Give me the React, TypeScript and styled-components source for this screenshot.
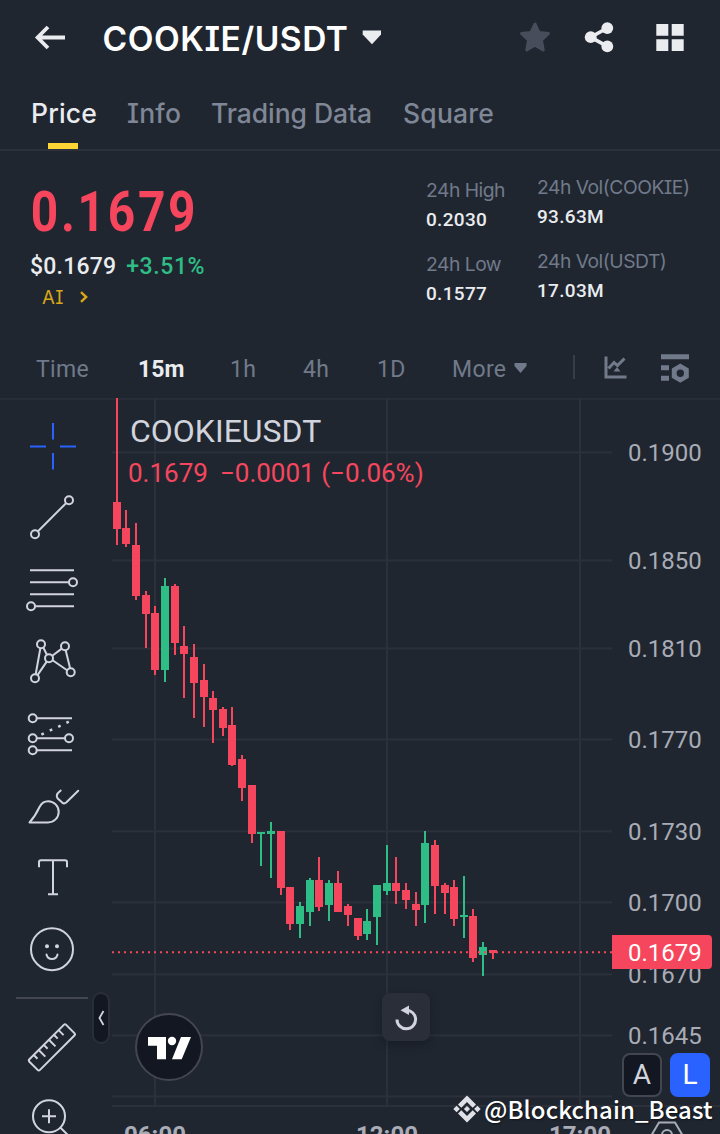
import React from "react";
import styled, { createGlobalStyle } from "styled-components";

const c = {
  bg: "#202630",
  line: "#2b303b",
  text: "#eaecef",
  muted: "#7f8796",
  dim: "#707a8a",
  red: "#f6465d",
  green: "#2ebd85",
  yellow: "#fcd535",
  icon: "#d1d4dc",
  axis: "#a9acb6",
  panel: "#131722",
  blue: "#2962ff",
};

const GlobalStyle = createGlobalStyle`
  * { box-sizing: border-box; }
  body { margin: 0; background: ${c.bg}; }
`;

const Screen = styled.main`
  display: flex;
  flex-direction: column;
  width: 720px;
  height: 1134px;
  overflow: hidden;
  background: ${c.bg};
  color: ${c.text};
  font-family: Inter, "Liberation Sans", sans-serif;
  font-feature-settings: "cv08" 1;
  white-space: nowrap;
`;

const Header = styled.header`
  display: flex;
  align-items: center;
  flex: none;
  height: 78px;
  padding: 0 34px 0 31px;
`;

const Title = styled.h1`
  width: 246px;
  margin: 0 14px 0 31px;
  padding-left: 0.5px;
  color: #fff;
  font-size: 33.5px;
  font-weight: 600;
  line-height: 40px;
  letter-spacing: 0.55px;
`;

const HeaderActions = styled.div`
  display: flex;
  gap: 30px;
  margin-left: auto;
`;

const Tabs = styled.nav`
  display: flex;
  gap: 30px;
  flex: none;
  height: 73px;
  padding: 18px 30px 0 31px;
  border-bottom: 2px solid ${c.line};
`;

const Tab = styled.div<{ $active?: boolean; $width: number; $track?: number }>`
  display: flex;
  flex-direction: column;
  width: ${(p) => p.$width}px;
  color: ${(p) => (p.$active ? c.text : c.muted)};
  font-size: 26.5px;
  font-weight: 500;
  line-height: 35px;
  letter-spacing: ${(p) => p.$track ?? 0.2}px;
`;

const TabMarker = styled.span`
  width: 30px;
  height: 6px;
  margin: 12px 0 0 17px;
  background: ${c.yellow};
`;

const Summary = styled.section`
  display: flex;
  flex: none;
  height: 189px;
  padding-left: 30px;
`;

const PriceColumn = styled.div`
  width: 396px;
  padding-top: 31px;
`;

const LastPrice = styled.div`
  padding-left: 1px;
  color: ${c.red};
  font: 700 55px/60px Roboto, sans-serif;
  letter-spacing: 3.1px;
  transform: scaleX(0.87);
  transform-origin: 0 50%;
`;

const PriceLine = styled.div`
  display: flex;
  gap: 10px;
  margin-top: 11px;
  font: 500 23px/28px Roboto, sans-serif;
  letter-spacing: 0.2px;
`;

const Change = styled.span`
  color: ${c.green};
  letter-spacing: 0.6px;
`;

const TagLink = styled.div`
  display: flex;
  align-items: center;
  gap: 15px;
  margin: 6px 0 0 12px;
  color: #d9a616;
  font-size: 18.6px;
  line-height: 20px;
  letter-spacing: 0.4px;
`;

const StatColumn = styled.dl<{ $width: number; $top: number }>`
  width: ${(p) => p.$width}px;
  margin: 0;
  padding-top: ${(p) => p.$top}px;
`;

const StatLabel = styled.dt`
  color: ${c.dim};
  font-size: 19.3px;
  line-height: 24px;
  letter-spacing: -0.5px;
`;

const StatValue = styled.dd`
  margin: 6px 0 20px;
  font: 500 19px/24px Roboto, sans-serif;
  letter-spacing: 0.3px;
`;

const Intervals = styled.nav`
  display: flex;
  align-items: center;
  flex: none;
  height: 58px;
  padding-left: 36px;
  font: 400 23px/28px Roboto, sans-serif;
`;

const Interval = styled.span<{ $width: number; $active?: boolean }>`
  width: ${(p) => p.$width}px;
  padding-top: 2px;
  color: ${(p) => (p.$active ? c.text : c.dim)};
  font-weight: ${(p) => (p.$active ? 700 : 400)};
  letter-spacing: ${(p) => (p.$active ? 0 : 0.35)}px;
`;

const Separator = styled.i`
  width: 2px;
  height: 24px;
  margin: 0 29px 4px 46px;
  background: #363c48;
`;

const IntervalActions = styled.div`
  display: flex;
  align-items: center;
  gap: 30px;
  padding-bottom: 3px;
`;

const Workspace = styled.section`
  display: flex;
  flex: 1;
  min-height: 0;
  box-shadow: inset 0 2px 0 #272c37;
`;

const Toolbar = styled.aside`
  position: relative;
  display: flex;
  flex-direction: column;
  flex: none;
  width: 112px;
  padding: 12px 0 0 16px;
`;

const Tool = styled.svg`
  flex: none;
  width: 72px;
  height: 72px;
  fill: none;
  stroke: ${c.icon};
  stroke-width: 2;
`;

const ToolDivider = styled.hr`
  flex: none;
  width: 72px;
  height: 2px;
  margin: 11px 0 12px;
  border: 0;
  background: #434651;
`;

const CollapseHandle = styled.button`
  position: absolute;
  top: 594px;
  left: 92px;
  display: flex;
  align-items: center;
  justify-content: center;
  width: 18px;
  height: 52px;
  padding: 0;
  border: 2px solid #2a2e39;
  border-radius: 9px;
  background: ${c.panel};
`;

const ChartArea = styled.div`
  position: relative;
  width: 608px;
`;

const ChartSvg = styled.svg`
  display: block;
  width: 608px;
  height: 736px;
  font-family: Roboto, sans-serif;
`;

const Legend = styled.div`
  position: absolute;
  top: 14px;
  left: 16px;
  font-family: Roboto, sans-serif;
`;

const Symbol = styled.div`
  padding-left: 2px;
  color: ${c.icon};
  font-size: 32px;
  line-height: 38px;
`;

const Quote = styled.div`
  display: flex;
  gap: 12px;
  margin-top: 7px;
  color: ${c.red};
  font-size: 26px;
  line-height: 32px;
`;

const BrandBadge = styled.div`
  position: absolute;
  top: 615px;
  left: 23px;
  width: 68px;
  height: 68px;
  border: 2px solid #434651;
  border-radius: 50%;
  background: ${c.panel};
`;

const ResetButton = styled.button`
  position: absolute;
  top: 595px;
  left: 270px;
  width: 48px;
  height: 48px;
  padding: 0;
  border: 0;
  border-radius: 8px;
  background: #2a2e39;
  box-shadow: 0 4px 8px rgba(10, 13, 20, 0.35);
`;

const ScaleButtons = styled.div`
  position: absolute;
  top: 655px;
  left: 510px;
  display: flex;
  gap: 8px;
`;

const ScaleButton = styled.button<{ $on?: boolean }>`
  width: 40px;
  height: 44px;
  padding: 0;
  border: 2px solid ${(p) => (p.$on ? c.blue : "#434651")};
  border-radius: 8px;
  background: ${(p) => (p.$on ? c.blue : c.panel)};
  color: ${(p) => (p.$on ? "#fff" : c.icon)};
  font: 400 28px/38px Roboto, sans-serif;
`;

const Watermark = styled.div`
  position: absolute;
  top: 693px;
  left: 341px;
  display: flex;
  align-items: center;
  gap: 3px;
  color: #fff;
  font: 500 24px/36px "Noto Sans CJK SC", sans-serif;
  letter-spacing: 0.1px;
  text-shadow: 1px 1px 2px rgba(0, 0, 0, 0.6);
`;

// x, high, body top, body bottom, low, rising
type Candle = [number, number, number, number, number, boolean?];

const candles: Candle[] = [
  [117, 398, 502, 529, 545],
  [126, 510, 528, 544, 547],
  [136, 523, 545, 596, 600],
  [146, 591, 595, 614, 648],
  [155, 606, 613, 670, 675],
  [165, 578, 586, 670, 682, true],
  [175, 584, 586, 643, 655],
  [184, 626, 646, 654, 698],
  [194, 644, 657, 683, 718],
  [204, 664, 680, 697, 727],
  [213, 691, 698, 710, 743],
  [223, 707, 709, 728, 736],
  [232, 707, 725, 765, 766],
  [242, 755, 759, 788, 801],
  [252, 785, 785, 834, 843],
  [261, 832, 832, 834, 866, true],
  [271, 822, 831, 834, 878, true],
  [281, 831, 831, 888, 895],
  [290, 887, 887, 924, 930],
  [300, 902, 906, 924, 938, true],
  [310, 878, 880, 912, 926, true],
  [319, 857, 880, 907, 911],
  [329, 880, 883, 905, 921, true],
  [338, 871, 883, 912, 912],
  [348, 904, 906, 915, 926],
  [358, 918, 918, 936, 940],
  [367, 909, 921, 934, 940, true],
  [377, 885, 885, 917, 945, true],
  [387, 845, 883, 891, 895, true],
  [396, 857, 883, 891, 904],
  [406, 883, 890, 900, 909],
  [416, 892, 904, 910, 926],
  [425, 831, 843, 905, 923, true],
  [435, 840, 845, 886, 914],
  [445, 883, 885, 893, 914],
  [454, 880, 887, 919, 926],
  [464, 876, 915, 917, 938, true],
  [473, 909, 916, 958, 962],
  [483, 942, 947, 955, 976, true],
  [493, 950, 950, 953, 959],
];

const levels: [number, string][] = [
  [452, "0.1900"],
  [560, "0.1850"],
  [648, "0.1810"],
  [739, "0.1770"],
  [831, "0.1730"],
  [902, "0.1700"],
  [974, "0.1670"],
  [1035, "0.1645"],
  [1096, ""],
];

const times: [number, string][] = [
  [155, "06:00"],
  [387, "12:00"],
  [580, "17:00"],
];

function Chart() {
  return (
    <ChartSvg viewBox="112 398 608 736">
      <g fill={c.line}>
        {times.map(([x]) => (
          <rect key={x} x={x - 1} y={398} width={2} height={708} />
        ))}
        {levels.map(([y]) => (
          <rect key={y} x={112} y={y - 0.6} width={500} height={2} />
        ))}
        <rect x={112} y={1105} width={608} height={2} />
      </g>
      {candles.map(([x, high, top, bottom, low, up]) => (
        <g key={x} fill={up ? c.green : c.red}>
          <rect x={x - 1} y={high} width={2} height={low - high} />
          <rect x={x - 4} y={top} width={8} height={bottom - top} />
        </g>
      ))}
      <path d="M112 952.2H612" stroke={c.red} strokeWidth={2} strokeDasharray="2 4" />
      <g fill={c.axis} fontSize={24}>
        {levels.map(([y, label]) => (
          <text key={y} x={628} y={y + 9}>
            {label}
          </text>
        ))}
      </g>
      <path d="M612 935h96a4 4 0 0 1 4 4v26a4 4 0 0 1-4 4h-96z" fill={c.red} />
      <text x={628} y={961} fontSize={24} fill="#fff">
        0.1679
      </text>
      <g fill={c.axis} fontSize={24} fontWeight={700} textAnchor="middle">
        {times.map(([x, label]) => (
          <text key={x} x={x} y={1142.5}>
            {label}
          </text>
        ))}
      </g>
      <g fill="none" stroke={c.axis} strokeWidth={2}>
        <path d="M651 1136l8-13.5h16l8 13.5" />
        <circle cx={667} cy={1135} r={5} />
      </g>
    </ChartSvg>
  );
}

function DrawingTools() {
  return (
    <Toolbar>
      <Tool viewBox="0 0 72 72">
        <path stroke={c.blue} d="M37 13v16.500M37 43v16.500M14 36.500h16M44 36.500h16" />
      </Tool>
      <Tool viewBox="0 0 72 72">
        <circle cx="53" cy="18.300" r="4" />
        <circle cx="19" cy="52.200" r="4" />
        <path d="M22 49.300L50 21.200" />
      </Tool>
      <Tool viewBox="0 0 72 72">
        <path d="M14 16.300h44M14 28.300h39M14 40.300h44M19 52.300h39" />
        <circle cx="57" cy="28.300" r="4" />
        <circle cx="15" cy="52.300" r="4" />
      </Tool>
      <Tool viewBox="0 0 72 72">
        <circle cx="25" cy="18.200" r="4" />
        <circle cx="49" cy="20.200" r="4" />
        <circle cx="33" cy="32.300" r="4" />
        <circle cx="19" cy="52.300" r="4" />
        <circle cx="54.700" cy="46.300" r="4" />
        <path d="M24.400 22L19.700 48.300M27.300 21.500l3.600 7.300M45.800 22.600l-9.500 7.200M30.700 35.600L21.500 49.100M36.600 34.200l14.500 10M49.600 24l4.500 18.300" />
      </Tool>
      <Tool viewBox="0 0 72 72">
        <circle cx="16.700" cy="20.300" r="4" />
        <circle cx="16.700" cy="40.300" r="4" />
        <circle cx="16.700" cy="52.300" r="4" />
        <circle cx="53" cy="40.300" r="4" />
        <path d="M21 20.300h35M21 40.300h28M21 52.300h35" />
        <path strokeWidth="2.600" d="M25.400 36.600l2.400-1.200M33.800 32.600l2.400-1.200M42.200 28.900l2.400-1.200M50.400 24.900l2.400-1.200" />
      </Tool>
      <Tool viewBox="0 0 72 72" strokeLinecap="round" strokeLinejoin="round">
        <path d="M13.500 52.400C18.500 47 20.500 43.500 23.500 37C25.500 33 29 31.200 32.200 31.200A10.600 10.600 0 0 1 32 52.400Z" />
        <path d="M44.700 20.600L42 22.900Q39.800 25.500 41.700 28.500L46.200 32.600Q48.200 34.200 50.200 32.500L62.200 20.800" />
      </Tool>
      <Tool viewBox="0 0 72 72">
        <path d="M23 25.300V20Q23 18.300 25 18.300H49Q51 18.300 51 20V25.300M37 18.300V52.300M32 52.300h10" />
      </Tool>
      <Tool viewBox="0 0 72 72" strokeLinecap="round">
        <circle cx="36" cy="35.200" r="21" />
        <path d="M30.500 40.500Q31.500 45 36 45T41.500 40.500" />
        <g fill={c.icon} stroke="none">
          <circle cx="31" cy="32.300" r="2" />
          <circle cx="41" cy="32.300" r="2" />
        </g>
      </Tool>
      <ToolDivider />
      <Tool viewBox="0 0 72 72" strokeLinejoin="round">
        <path d="M47.800 13.900Q49 12.700 50.200 13.900L58.400 22.100Q59.600 23.300 58.400 24.500L24 58.900Q22.800 60.100 21.600 58.900L13.400 50.700Q12.200 49.500 13.400 48.300Z" />
        <path d="M17.700 44l3.800 3.800M22.700 39l6.600 6.600M27.800 33.900l3.800 3.800M32.900 28.800l6.600 6.600M37.900 23.800l3.800 3.800M42.600 19.100l5 5" />
      </Tool>
      <Tool viewBox="0 0 72 72">
        <circle cx="33" cy="33.300" r="16" />
        <path d="M26 33.300h14M33 26.300v14M44.500 44.800L60 60" />
      </Tool>
      <CollapseHandle>
        <svg width="7" height="16" viewBox="0 0 7 16" fill="none" stroke={c.icon} strokeWidth="1.800">
          <path d="M5.500 1L1.500 8l4 7" />
        </svg>
      </CollapseHandle>
    </Toolbar>
  );
}

export default function App() {
  return (
    <Screen>
      <GlobalStyle />
      <Header>
        <svg width="40" height="40" viewBox="0 0 40 40" fill="none" stroke={c.text} strokeWidth="3.800">
          <path d="M34 18.500H7M17 8L6.600 18.500L17 29" />
        </svg>
        <Title>COOKIE/USDT</Title>
        <svg width="20" height="40" viewBox="0 0 20 40" fill={c.text}>
          <path d="M0.700 11.500H19V15.500L10 25.200L0.700 15.500z" />
        </svg>
        <HeaderActions>
          <svg width="36" height="40" viewBox="1 0 36 40" fill="#474d5a" stroke="#474d5a" strokeWidth="3" strokeLinejoin="round">
            <path d="M18 5L21.900 13.400L31.500 14.500L24.500 21.200L26.200 31L18 26.300L9.800 31L11.500 21.200L4.500 14.500L14.100 13.400Z" />
          </svg>
          <svg width="36" height="40" viewBox="2 0 36 40" fill={c.text}>
            <circle cx="8.700" cy="18.200" r="5.900" />
            <circle cx="25.300" cy="9.100" r="5.900" />
            <circle cx="25.300" cy="27.400" r="5.900" />
            <path d="M25.300 9L8.700 18.200L25.300 27.300" fill="none" stroke={c.text} strokeWidth="3.600" />
          </svg>
          <svg width="36" height="40" viewBox="0 0 36 40" fill={c.text}>
            <path d="M6.300 5h12v11.700h-12zM21.700 5h12v11.700h-12zM6.300 20.200h12v11.800h-12zM21.700 20.200h12v11.800h-12z" />
          </svg>
        </HeaderActions>
      </Header>

      <Tabs>
        <Tab $active $width={66}>
          Price
          <TabMarker />
        </Tab>
        <Tab $width={54}>Info</Tab>
        <Tab $width={162} $track={-0.07}>
          Trading Data
        </Tab>
        <Tab $width={91}>Square</Tab>
      </Tabs>

      <Summary>
        <PriceColumn>
          <LastPrice>0.1679</LastPrice>
          <PriceLine>
            <span>$0.1679</span>
            <Change>+3.51%</Change>
          </PriceLine>
          <TagLink>
            AI
            <svg width="10" height="12" viewBox="0 0 10 12" fill="none" stroke="currentColor" strokeWidth="2.400">
              <path d="M2 1.200L7.200 6L2 10.800" />
            </svg>
          </TagLink>
        </PriceColumn>
        <StatColumn $width={111} $top={27}>
          <StatLabel>24h High</StatLabel>
          <StatValue>0.2030</StatValue>
          <StatLabel>24h Low</StatLabel>
          <StatValue>0.1577</StatValue>
        </StatColumn>
        <StatColumn $width={160} $top={24}>
          <StatLabel>24h Vol(COOKIE)</StatLabel>
          <StatValue>93.63M</StatValue>
          <StatLabel>24h Vol(USDT)</StatLabel>
          <StatValue>17.03M</StatValue>
        </StatColumn>
      </Summary>

      <Intervals>
        <Interval $width={102}>Time</Interval>
        <Interval $width={92} $active>
          15m
        </Interval>
        <Interval $width={73}>1h</Interval>
        <Interval $width={74}>4h</Interval>
        <Interval $width={75}>1D</Interval>
        <Interval $width={62}>More</Interval>
        <svg width="13" height="14" viewBox="0 0 13 14" fill={c.dim}>
          <path d="M0.500 1H12.500V4L6.500 11L0.500 4z" />
        </svg>
        <Separator />
        <IntervalActions>
          <svg width="26" height="28" viewBox="0 0 26 28" fill="none" stroke={c.dim} strokeWidth="3">
            <path d="M2 2.500V23H22.500M4.500 14.500L10 8.500L13.500 11.500L20.500 4.500" />
            <path d="M13 13L16.500 17.500H9.500z" fill={c.dim} stroke="none" />
          </svg>
          <svg width="30" height="32" viewBox="0 0 30 32" fill={c.dim}>
            <path d="M1 2.300h28v5h-28zM1 13.300h8v5h-8zM1 23.800h8v5h-8z" />
            <path fillRule="evenodd" d="M20.300 11.500l8.500 5v9.300l-8.500 5-8.500-5v-9.300zM20.300 17.500a3.700 3.700 0 1 0 0 7.400a3.700 3.700 0 1 0 0-7.400z" />
          </svg>
        </IntervalActions>
      </Intervals>

      <Workspace>
        <DrawingTools />
        <ChartArea>
          <Chart />
          <Legend>
            <Symbol>COOKIEUSDT</Symbol>
            <Quote>
              <span>0.1679</span>
              <span>−0.0001 (−0.06%)</span>
            </Quote>
          </Legend>
          <BrandBadge>
            <svg width="64" height="64" viewBox="2 2 64 64" fill="#fff">
              <path d="M13 24h18v22.300h-9V32.700h-9zM46 24h10l-9.300 22.300h-9.700z" />
              <circle cx="37" cy="28" r="4.200" />
            </svg>
          </BrandBadge>
          <ResetButton>
            <svg width="48" height="48" viewBox="0 0 48 48" fill="none" stroke={c.icon} strokeWidth="3">
              <path d="M15 26.500A9.300 9.300 0 1 0 24 17.200H22" />
              <path d="M27 12.500v9.500l-8.500-4.800z" fill={c.icon} stroke="none" />
            </svg>
          </ResetButton>
          <ScaleButtons>
            <ScaleButton>A</ScaleButton>
            <ScaleButton $on>L</ScaleButton>
          </ScaleButtons>
          <Watermark>
            <svg width="28" height="28" viewBox="0 0 28 28" fill="#dfe1e6">
              <path d="M14 0.500l9 9-3.300 3.300L14 7.100l-5.700 5.700L5 9.500zM14 27.500l9-9-3.300-3.300L14 20.900l-5.700-5.700L5 18.500zM14 10.900l3.100 3.100-3.100 3.100-3.100-3.100zM3.600 10.700L6.900 14l-3.300 3.300L0.300 14zM24.400 10.700l3.300 3.300-3.300 3.300-3.300-3.300z" />
            </svg>
            @Blockchain_Beast
          </Watermark>
        </ChartArea>
      </Workspace>
    </Screen>
  );
}
